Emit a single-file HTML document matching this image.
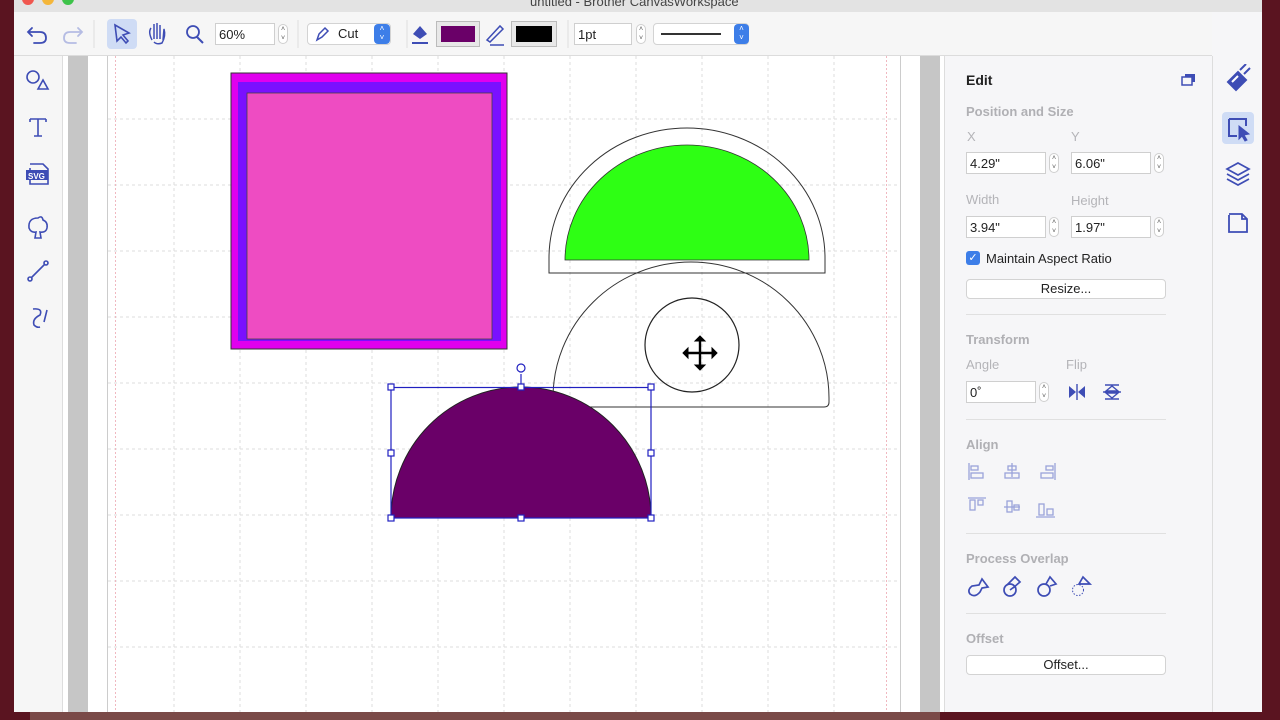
<!DOCTYPE html>
<html><head><meta charset="utf-8"><style>
*{margin:0;padding:0;box-sizing:border-box}
body{width:1280px;height:720px;overflow:hidden;background:#5a1420;font-family:"Liberation Sans",sans-serif;position:relative}
.a{position:absolute}
.lbl{position:absolute;font-size:13px;color:#b4b4b8}
.hd{position:absolute;font-size:13px;font-weight:bold;color:#b0b0b4}
.inp{position:absolute;height:22px;background:#fff;border:1px solid #cfcfcf;font-size:13px;padding:3px 3px;color:#222}
.stp{position:absolute;width:10px;height:20px;border:1px solid #cfcfcf;border-radius:5px;background:#fff;font-size:7px;color:#555;text-align:center;line-height:9px}
.btn{position:absolute;height:20px;background:#fff;border:1px solid #d3d3d3;border-radius:4px;font-size:13px;text-align:center;line-height:18px;color:#222}
.sep{position:absolute;height:1px;background:#e0e0e0}
</style></head><body>
<!-- title bar -->
<div class="a" style="left:14px;top:0;width:1248px;height:12px;background:#e3e3e3"></div>
<div class="a" style="left:530px;top:-6px;font-size:13px;color:#444">untitled - Brother CanvasWorkspace</div>
<div class="a" style="left:22px;top:-7px;width:12px;height:12px;border-radius:6px;background:#f0574f"></div>
<div class="a" style="left:42px;top:-7px;width:12px;height:12px;border-radius:6px;background:#f4b63a"></div>
<div class="a" style="left:62px;top:-7px;width:12px;height:12px;border-radius:6px;background:#3ec34a"></div>
<!-- toolbar -->
<div class="a" style="left:14px;top:12px;width:1248px;height:44px;background:#f6f6f6;border-bottom:1px solid #dcdcdc"></div>
<svg class="a" style="left:14px;top:12px" width="760" height="43">
 <g fill="none" stroke="#3e4db5" stroke-width="1.8" stroke-linecap="round">
  <path d="M18 16 L14 20 L18 24 M14 20 H26 Q32 20 32 26 Q32 31 26 31 H20"/>
  <path d="M64 16 L68 20 L64 24 M68 20 H56 Q50 20 50 26 Q50 31 56 31 H62" stroke="#b5bce3"/>
 </g>
 <line x1="80" y1="8" x2="80" y2="36" stroke="#ddd"/>
 <rect x="93" y="7" width="30" height="30" rx="4" fill="#cfdcf5"/>
 <path d="M101 13 L115 21 L109 23 L114 29 L112 31 L107 25 L103 29 Z" fill="none" stroke="#3e4db5" stroke-width="1.6"/>
 <path d="M138 28 Q134 20 137 16 M140 27 L140 12 M143 27 L143 11 M146 27 L146 13 M149 28 L150 17 Q152 24 148 31 Q143 33 140 30" fill="none" stroke="#3e4db5" stroke-width="1.5"/>
 <circle cx="179" cy="20" r="6" fill="none" stroke="#3e4db5" stroke-width="1.8"/><line x1="183" y1="25" x2="189" y2="31" stroke="#3e4db5" stroke-width="2"/>
 <line x1="284" y1="8" x2="284" y2="36" stroke="#ddd"/>
 <line x1="393" y1="8" x2="393" y2="36" stroke="#ddd"/>
 <path d="M399 22 L406 14 L413 22 L406 27 Z" fill="#3e4db5"/><line x1="398" y1="31" x2="414" y2="31" stroke="#3e4db5" stroke-width="2"/>
 <path d="M473 28 L486 14 L489 17 L476 30 Z" fill="none" stroke="#3e4db5" stroke-width="1.5"/><line x1="476" y1="33" x2="490" y2="33" stroke="#3e4db5" stroke-width="1.5"/>
 <line x1="554" y1="8" x2="554" y2="36" stroke="#ddd"/>
</svg>
<div class="inp" style="left:215px;top:23px;width:60px">60%</div>
<div class="stp" style="left:278px;top:24px">˄<br>˅</div>
<div class="btn" style="left:307px;top:23px;width:84px;height:22px;text-align:left;padding-left:30px;line-height:20px">Cut</div>
<svg class="a" style="left:314px;top:26px" width="16" height="16"><path d="M3 14 L5 8 L11 2 L14 5 L8 11 Z" fill="none" stroke="#3e4db5" stroke-width="1.5"/></svg>
<div class="a" style="left:374px;top:24px;width:16px;height:20px;background:#3d7ee8;border-radius:4px;color:#fff;font-size:8px;text-align:center;line-height:9px">˄<br>˅</div>
<div class="a" style="left:436px;top:21px;width:44px;height:26px;background:#e8e8e8;border:1px solid #bbb"></div>
<div class="a" style="left:441px;top:26px;width:34px;height:16px;background:#6a0068"></div>
<div class="a" style="left:511px;top:21px;width:46px;height:26px;background:#e8e8e8;border:1px solid #bbb"></div>
<div class="a" style="left:516px;top:26px;width:36px;height:16px;background:#000"></div>
<div class="inp" style="left:574px;top:23px;width:58px">1pt</div>
<div class="stp" style="left:636px;top:24px">˄<br>˅</div>
<div class="btn" style="left:653px;top:23px;width:96px;height:22px"></div>
<div class="a" style="left:661px;top:33px;width:60px;height:1.5px;background:#333"></div>
<div class="a" style="left:734px;top:24px;width:15px;height:20px;background:#3d7ee8;border-radius:4px;color:#fff;font-size:8px;text-align:center;line-height:9px">˄<br>˅</div>
<!-- left tools -->
<div class="a" style="left:14px;top:56px;width:49px;height:656px;background:#f6f6f6;border-right:1px solid #ddd"></div>
<svg class="a" style="left:14px;top:56px" width="48" height="300" fill="none" stroke="#3e4db5" stroke-width="1.6">
 <circle cx="19" cy="21" r="6"/><path d="M24 33 L29 24 L34 33 Z"/>
 <path d="M16 63 H32 M24 63 V80 M20 80 H28 M16 63 V66 M32 63 V66"/>
 <path d="M16 112 V128 H34 V113 L29 108 H16" /><rect x="12" y="114" width="22" height="10" fill="#3e4db5" stroke="none"/>
 <text x="14" y="123" font-size="8" fill="#fff" stroke="none" font-family="Liberation Sans" font-weight="bold">SVG</text>
 <path d="M24 162 Q14 162 15 172 Q17 177 22 176 L21 182 H27 L26 176 Q32 177 33 172 Q34 166 29 164 Q28 159 24 162 Z"/>
 <path d="M17 222 L31 208"/><circle cx="16" cy="223" r="2"/><circle cx="32" cy="207" r="2"/>
 <path d="M19 253 Q29 252 26 259 Q18 263 20 269 Q23 272 26 271 M30 266 L33 254"/>
</svg>
<!-- canvas area -->
<div class="a" style="left:63px;top:56px;width:881px;height:656px;background:#fff"></div>
<div class="a" style="left:68px;top:56px;width:20px;height:656px;background:#c6c6c6"></div>
<div class="a" style="left:920px;top:56px;width:20px;height:656px;background:#c6c6c6"></div>
<div class="a" style="left:900px;top:56px;width:1px;height:656px;background:#ccc"></div>
<div class="a" style="left:107px;top:56px;width:1px;height:656px;background:#ccc"></div>
<svg class="a" style="left:0;top:0" width="944" height="712">
 <g stroke="#ddd" stroke-dasharray="3,3" stroke-width="1">
  <path d="M174 56V712M240 56V712M306 56V712M372 56V712M438 56V712M504 56V712M570 56V712M636 56V712M702 56V712M768 56V712M834 56V712"/>
  <path d="M108 119H900M108 185H900M108 251H900M108 317H900M108 383H900M108 449H900M108 515H900M108 581H900M108 647H900"/>
 </g>
 <g stroke="#f0b8c0" stroke-dasharray="2,2"><path d="M115.5 56V712M886.5 56V712"/></g>
 <rect x="231" y="73" width="276" height="276" fill="#e000ee" stroke="#333" stroke-width="1"/>
 <rect x="238" y="82" width="263" height="259" fill="#7a10ff"/>
 <rect x="247" y="93" width="245" height="246" fill="#ee4cc2" stroke="#444" stroke-width="0.8"/>
 <path d="M549 273 V258 A138 130 0 0 1 825 258 V273 Z" fill="none" stroke="#333"/>
 <path d="M565 260 A122 115 0 0 1 809 260 Z" fill="#2eff14" stroke="#333" stroke-width="0.8"/>
 <path d="M557 407 Q553 407 553 402 V398 A138 136 0 0 1 829 398 V402 Q829 407 824 407 Z" fill="none" stroke="#333"/>
 <circle cx="692" cy="345" r="47" fill="none" stroke="#222" stroke-width="1.2"/>
 <path d="M391 518 A130 131 0 0 1 651 518 Z" fill="#6a0068" stroke="#222"/>
 <g stroke="#2020c0" fill="#fff" stroke-width="1.2">
  <rect x="391" y="387.5" width="260" height="130.5" fill="none"/>
  <line x1="521" y1="374" x2="521" y2="387"/><circle cx="521" cy="368" r="4"/>
  <rect x="388" y="384" width="6" height="6"/><rect x="518" y="384" width="6" height="6"/><rect x="648" y="384" width="6" height="6"/>
  <rect x="388" y="450" width="6" height="6"/><rect x="648" y="450" width="6" height="6"/>
  <rect x="388" y="515" width="6" height="6"/><rect x="518" y="515" width="6" height="6"/><rect x="648" y="515" width="6" height="6"/>
 </g>
 <g stroke="#000" stroke-width="2.4" fill="#000">
  <path d="M686 353 H714 M700 339 V367" fill="none"/>
  <path d="M683 353 L688 348 V358Z M717 353 L712 348 V358Z M700 336 L695 341 H705Z M700 370 L695 365 H705Z" stroke-width="1"/>
 </g>
</svg>
<!-- right panel -->
<div class="a" style="left:1212px;top:12px;width:50px;height:700px;background:#f6f6f8"></div>
<div class="a" style="left:944px;top:56px;width:269px;height:656px;background:#f6f6f8;border-left:1px solid #ddd;border-right:1px solid #ddd"></div>
<div class="a" style="left:966px;top:72px;font-size:14px;font-weight:bold;color:#222">Edit</div>
<svg class="a" style="left:1181px;top:72px" width="16" height="16"><rect x="4" y="2" width="10" height="8" fill="#3e4db5"/><rect x="1" y="5" width="10" height="8" fill="#f6f6f8" stroke="#3e4db5" stroke-width="1.5"/></svg>
<div class="hd" style="left:966px;top:104px">Position and Size</div>
<div class="lbl" style="left:967px;top:129px">X</div><div class="lbl" style="left:1071px;top:129px">Y</div>
<div class="inp" style="left:966px;top:152px;width:80px">4.29"</div><div class="stp" style="left:1049px;top:153px">˄<br>˅</div>
<div class="inp" style="left:1071px;top:152px;width:80px">6.06"</div><div class="stp" style="left:1154px;top:153px">˄<br>˅</div>
<div class="lbl" style="left:966px;top:192px">Width</div><div class="lbl" style="left:1071px;top:193px">Height</div>
<div class="inp" style="left:966px;top:216px;width:80px">3.94"</div><div class="stp" style="left:1049px;top:217px">˄<br>˅</div>
<div class="inp" style="left:1071px;top:216px;width:80px">1.97"</div><div class="stp" style="left:1154px;top:217px">˄<br>˅</div>
<div class="a" style="left:966px;top:251px;width:14px;height:14px;background:#3d7ee8;border-radius:3px;color:#fff;font-size:11px;text-align:center;line-height:14px">✓</div>
<div class="a" style="left:986px;top:251px;font-size:13px;color:#222">Maintain Aspect Ratio</div>
<div class="btn" style="left:966px;top:279px;width:200px">Resize...</div>
<div class="sep" style="left:966px;top:314px;width:200px"></div>
<div class="hd" style="left:966px;top:332px">Transform</div>
<div class="lbl" style="left:966px;top:357px">Angle</div><div class="lbl" style="left:1066px;top:357px">Flip</div>
<div class="inp" style="left:966px;top:381px;width:70px">0˚</div><div class="stp" style="left:1039px;top:382px">˄<br>˅</div>
<svg class="a" style="left:1066px;top:382px" width="60" height="20" fill="#3e4db5">
 <path d="M3 4 L10 10 L3 16Z M19 4 L12 10 L19 16Z"/><rect x="10.3" y="2" width="1.4" height="16"/>
 <path d="M39 3 H53 M46 4 L40 9 H52Z M46 16 L40 11 H52Z M39 17 H53" stroke="#3e4db5" stroke-width="1.4" fill="none"/><rect x="37" y="9.3" width="18" height="1.4"/>
</svg>
<div class="sep" style="left:966px;top:419px;width:200px"></div>
<div class="hd" style="left:966px;top:437px">Align</div>
<svg class="a" style="left:966px;top:460px" width="100" height="60" fill="none" stroke="#9aa3da" stroke-width="1.3">
 <path d="M3 3V20"/><rect x="5" y="6" width="7" height="4"/><rect x="5" y="13" width="12" height="5"/>
 <path d="M46 3V17"/><rect x="42" y="6" width="8" height="4"/><rect x="39" y="13" width="14" height="5"/>
 <path d="M89 3V20"/><rect x="80" y="6" width="7" height="4"/><rect x="75" y="13" width="12" height="5"/>
 <path d="M2 38H20"/><rect x="4" y="40" width="5" height="10"/><rect x="12" y="40" width="5" height="5"/>
 <path d="M38 47H54"/><rect x="41" y="41" width="5" height="11"/><rect x="48" y="45" width="5" height="5"/>
 <path d="M70 57H89"/><rect x="73" y="44" width="5" height="11"/><rect x="81" y="49" width="6" height="6"/>
</svg>
<div class="sep" style="left:966px;top:533px;width:200px"></div>
<div class="hd" style="left:966px;top:551px">Process Overlap</div>
<svg class="a" style="left:966px;top:574px" width="130" height="26" fill="none" stroke="#3e4db5" stroke-width="1.7">
 <path d="M6 12 Q1 16 4 20 Q9 24 14 18 L16 14 L22 13 L16 5 L13 11 Z"/>
 <circle cx="44" cy="16" r="6"/><path d="M41 11 L49 3 L54 8 L47 14"/><path d="M44 16 L48 13" />
 <circle cx="78" cy="16" r="6"/><path d="M80 10 L84 3 L90 10 L84 12"/>
 <circle cx="112" cy="16" r="5.5" stroke-dasharray="1.5,1.5" stroke-width="1"/><path d="M113 10 L117 3 L124 10 Z"/>
</svg>
<div class="sep" style="left:966px;top:613px;width:200px"></div>
<div class="hd" style="left:966px;top:631px">Offset</div>
<div class="btn" style="left:966px;top:655px;width:200px">Offset...</div>
<!-- tab icons -->
<svg class="a" style="left:1222px;top:64px" width="34" height="180" fill="none" stroke="#3e4db5" stroke-width="2">
 <path d="M6 18 L16 8 L24 16 L14 26 Z" fill="#3e4db5"/><path d="M18 6 L24 0 M22 10 L28 4"/><path d="M10 18 L16 12" stroke="#fff"/>
 <rect x="0" y="48" width="32" height="32" rx="4" fill="#cfdcf5" stroke="none"/>
 <path d="M7 55H24V62 M7 55V72H15" /><path d="M17 62 L27 70 L22 71 L25 76 L23 77 L20 72 L17 75 Z" fill="#3e4db5" stroke-width="1"/>
 <path d="M16 99 L27 105 L16 111 L5 105 Z M5 110 L16 116 L27 110 M5 115 L16 121 L27 115" stroke-width="1.7"/>
 <path d="M7 151 V168 H25 V155 L20 150 H7 M20 150 V155 H25" stroke-width="1.8"/>
</svg>
<!-- bottom dock -->
<div class="a" style="left:30px;top:712px;width:910px;height:8px;background:#7a4a48"></div>
</body></html>
